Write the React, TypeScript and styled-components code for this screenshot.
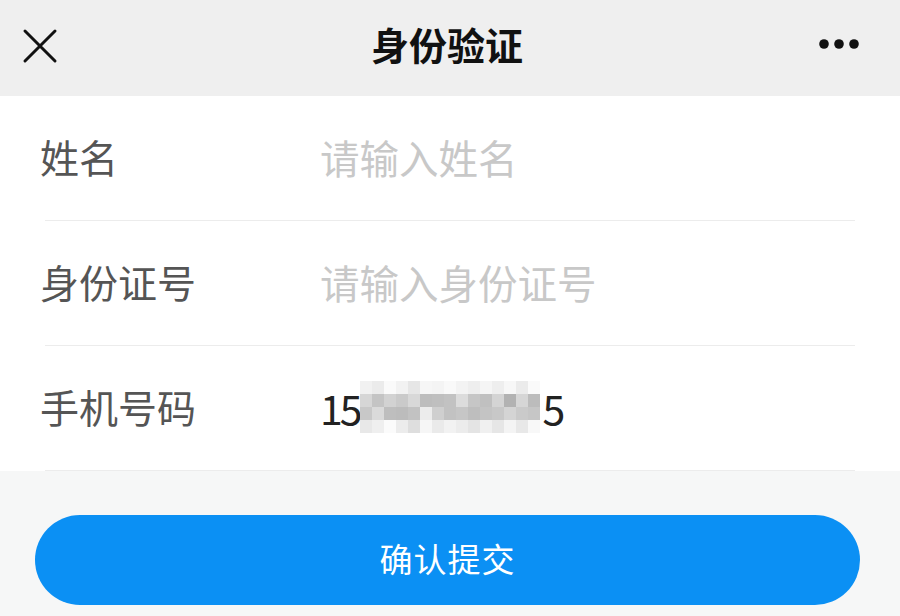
import React from 'react';
import styled, { createGlobalStyle } from 'styled-components';

const GlobalStyle = createGlobalStyle`
  html, body {
    margin: 0;
    padding: 0;
    background: #f6f7f7;
  }
  body {
    font-family: "Noto Sans CJK SC", "Noto Sans", sans-serif;
  }
`;

const Page = styled.div`
  width: 900px;
  height: 616px;
  overflow: hidden;
  background: #f6f7f7;
`;

const Header = styled.div`
  height: 96px;
  background: #efefef;
  display: grid;
  grid-template-columns: 120px 1fr 120px;
  align-items: center;
`;

const IconSlot = styled.div<{ $align: 'start' | 'end' }>`
  display: flex;
  justify-content: ${p => (p.$align === 'start' ? 'flex-start' : 'flex-end')};
  padding: ${p => (p.$align === 'start' ? '0 0 4px 22px' : '0 40px 8px 0')};
`;

const Title = styled.h1`
  margin: 0;
  text-align: center;
  font-size: 38px;
  font-weight: 700;
  color: #111;
  padding: 0 6px 10px 0;
`;

const Form = styled.div`
  background: #fff;
`;

const Row = styled.div`
  height: 124px;
  display: flex;
  align-items: center;
  padding: 0 40px;
`;

const Label = styled.div`
  width: 280px;
  font-size: 39px;
  color: #555;
  padding-bottom: 4px;
`;

const Placeholder = styled.div`
  font-size: 39.5px;
  color: #c8c8c8;
  padding-bottom: 4px;
`;

const Value = styled.div`
  display: flex;
  align-items: center;
  font-size: 41px;
  color: #222;
  letter-spacing: -3px;
  padding-bottom: 2px;
`;

const Divider = styled.div`
  height: 1px;
  margin: 0 45px;
  background: #ececec;
`;

const Mosaic = styled.div`
  display: grid;
  grid-template-columns: repeat(15, 12px);
  grid-template-rows: repeat(4, 13px);
  margin: 0 3px 0 0;
`;

const Cell = styled.div<{ $shade: string }>`
  background: ${p => p.$shade};
`;

const Footer = styled.div`
  padding: 44px 40px 0 35px;
`;

const SubmitButton = styled.button`
  width: 825px;
  height: 90px;
  border: none;
  border-radius: 45px;
  background: #0b90f4;
  color: #fff;
  font-family: "Noto Sans CJK SC", sans-serif;
  font-size: 33px;
  letter-spacing: 1px;
  padding-bottom: 6px;
  cursor: pointer;
`;

// blurred digits of the phone number
const mosaicRows: string[][] = [
  ['#f1f1f1', '#ebebeb', '#fafafa', '#f2f2f2', '#e6e6e6', '#f6f6f6', '#f4f4f4', '#f9f9f9', '#f3f3f3', '#eeeeee', '#f5f5f5', '#eeeeee', '#f7f7f7', '#ebebeb', '#fafafa'],
  ['#d6d6d6', '#c4c4c4', '#d2d2d2', '#cacaca', '#d8d8d8', '#bdbdbd', '#bfbfbf', '#c2c2c2', '#dcdcdc', '#c6c6c6', '#c0c0c0', '#d4d4d4', '#b2b2b2', '#d6d6d6', '#bcbcbc'],
  ['#c8c8c8', '#dadada', '#bebebe', '#bcbcbc', '#c2c2c2', '#ececec', '#cfcfcf', '#c2c2c2', '#c6c6c6', '#bebebe', '#c4c4c4', '#c8c8c8', '#d4d4d4', '#cacaca', '#c6c6c6'],
  ['#e8e8e8', '#efefef', '#fbfbfb', '#ececec', '#dedede', '#f6f6f6', '#eaeaea', '#f2f2f2', '#ececec', '#e4e4e4', '#f0f0f0', '#e6e6e6', '#f4f4f4', '#e8e8e8', '#f8f8f8'],
];

const CloseIcon = () => (
  <svg width="36" height="36" viewBox="0 0 36 36">
    <path d="M3 3 L33 33 M33 3 L3 33" stroke="#111" strokeWidth="3" strokeLinecap="round" fill="none" />
  </svg>
);

const MoreIcon = () => (
  <svg width="42" height="12" viewBox="0 0 42 12">
    <circle cx="6" cy="6" r="4.8" fill="#111" />
    <circle cx="21" cy="6" r="4.8" fill="#111" />
    <circle cx="36" cy="6" r="4.8" fill="#111" />
  </svg>
);

const App: React.FC = () => {
  return (
    <Page>
      <GlobalStyle />
      <Header>
        <IconSlot $align="start">
          <CloseIcon />
        </IconSlot>
        <Title>身份验证</Title>
        <IconSlot $align="end">
          <MoreIcon />
        </IconSlot>
      </Header>

      <Form>
        <Row>
          <Label>姓名</Label>
          <Placeholder>请输入姓名</Placeholder>
        </Row>
        <Divider />
        <Row>
          <Label>身份证号</Label>
          <Placeholder>请输入身份证号</Placeholder>
        </Row>
        <Divider />
        <Row>
          <Label>手机号码</Label>
          <Value>
            15
            <Mosaic>
              {mosaicRows.flat().map((shade, i) => (
                <Cell key={i} $shade={shade} />
              ))}
            </Mosaic>
            5
          </Value>
        </Row>
        <Divider />
      </Form>

      <Footer>
        <SubmitButton>确认提交</SubmitButton>
      </Footer>
    </Page>
  );
};

export default App;
